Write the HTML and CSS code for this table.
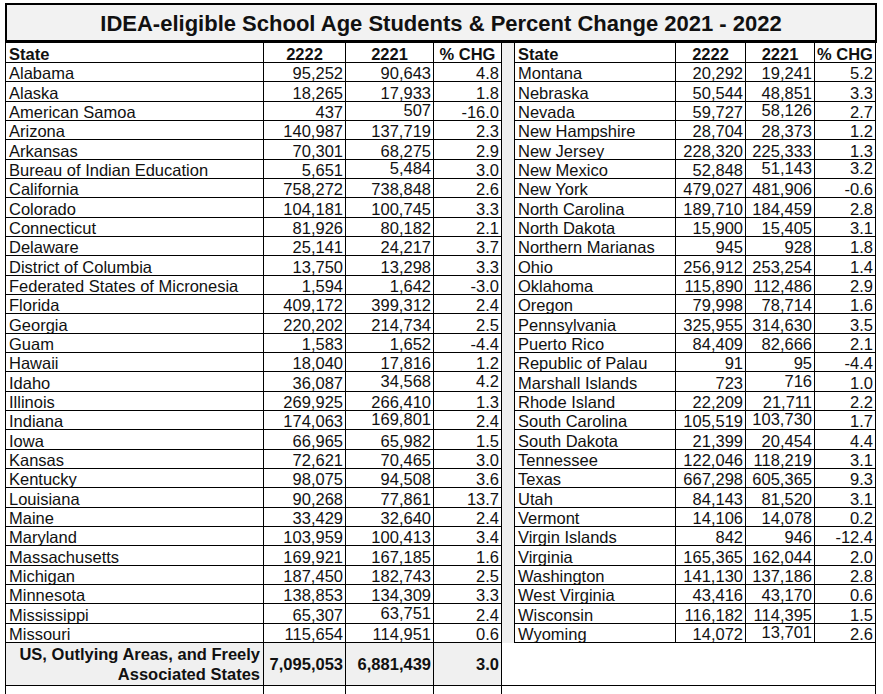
FILE: index.html
```html
<!DOCTYPE html>
<html lang="en">
<head>
    <meta charset="UTF-8">
    <title>IDEA-eligible School Age Students</title>
    <link rel="stylesheet" href="styles.css">
</head>
<body>
    <div class="sheet">
        <div class="title">IDEA-eligible School Age Students &amp; Percent Change 2021 - 2022</div>
        <table class="grid">
            <colgroup>
                <col class="c-state-l">
                <col class="c-a-l">
                <col class="c-b-l">
                <col class="c-pct-l">
                <col class="c-gap">
                <col class="c-state-r">
                <col class="c-a-r">
                <col class="c-b-r">
                <col class="c-pct-r">
            </colgroup>
            <thead>
                <tr class="head">
                    <th class="first">State</th><th>2222</th><th>2221</th><th>% CHG</th>
                    <td class="gap"></td>
                    <th class="first">State</th><th>2222</th><th>2221</th><th>% CHG</th>
                </tr>
            </thead>
            <tbody id="rows"></tbody>
            <tfoot>
                <tr class="total">
                    <td class="first label">US, Outlying Areas, and Freely<br>Associated States</td>
                    <td>7,095,053</td><td>6,881,439</td><td>3.0</td>
                    <td class="blank" colspan="5"></td>
                </tr>
                <tr class="tail">
                    <td class="first"></td><td></td><td></td><td></td>
                    <td class="blank" colspan="5"></td>
                </tr>
            </tfoot>
        </table>
    </div>

    <script>
        // 5th field: cells that sit a little high in the sheet (h)
        const left = [
            ['Alabama', '95,252', '90,643', '4.8'],
            ['Alaska', '18,265', '17,933', '1.8'],
            ['American Samoa', '437', '507', '-16.0', '..h.'],
            ['Arizona', '140,987', '137,719', '2.3'],
            ['Arkansas', '70,301', '68,275', '2.9'],
            ['Bureau of Indian Education', '5,651', '5,484', '3.0', '..h.'],
            ['California', '758,272', '738,848', '2.6'],
            ['Colorado', '104,181', '100,745', '3.3'],
            ['Connecticut', '81,926', '80,182', '2.1'],
            ['Delaware', '25,141', '24,217', '3.7'],
            ['District of Columbia', '13,750', '13,298', '3.3'],
            ['Federated States of Micronesia', '1,594', '1,642', '-3.0'],
            ['Florida', '409,172', '399,312', '2.4'],
            ['Georgia', '220,202', '214,734', '2.5'],
            ['Guam', '1,583', '1,652', '-4.4'],
            ['Hawaii', '18,040', '17,816', '1.2'],
            ['Idaho', '36,087', '34,568', '4.2', '..hh'],
            ['Illinois', '269,925', '266,410', '1.3'],
            ['Indiana', '174,063', '169,801', '2.4', '..h.'],
            ['Iowa', '66,965', '65,982', '1.5'],
            ['Kansas', '72,621', '70,465', '3.0'],
            ['Kentucky', '98,075', '94,508', '3.6'],
            ['Louisiana', '90,268', '77,861', '13.7'],
            ['Maine', '33,429', '32,640', '2.4'],
            ['Maryland', '103,959', '100,413', '3.4'],
            ['Massachusetts', '169,921', '167,185', '1.6'],
            ['Michigan', '187,450', '182,743', '2.5'],
            ['Minnesota', '138,853', '134,309', '3.3'],
            ['Mississippi', '65,307', '63,751', '2.4', '..h.'],
            ['Missouri', '115,654', '114,951', '0.6']
        ];
        const right = [
            ['Montana', '20,292', '19,241', '5.2'],
            ['Nebraska', '50,544', '48,851', '3.3'],
            ['Nevada', '59,727', '58,126', '2.7', '..h.'],
            ['New Hampshire', '28,704', '28,373', '1.2'],
            ['New Jersey', '228,320', '225,333', '1.3'],
            ['New Mexico', '52,848', '51,143', '3.2', '..hh'],
            ['New York', '479,027', '481,906', '-0.6'],
            ['North Carolina', '189,710', '184,459', '2.8'],
            ['North Dakota', '15,900', '15,405', '3.1'],
            ['Northern Marianas', '945', '928', '1.8'],
            ['Ohio', '256,912', '253,254', '1.4'],
            ['Oklahoma', '115,890', '112,486', '2.9'],
            ['Oregon', '79,998', '78,714', '1.6'],
            ['Pennsylvania', '325,955', '314,630', '3.5'],
            ['Puerto Rico', '84,409', '82,666', '2.1'],
            ['Republic of Palau', '91', '95', '-4.4'],
            ['Marshall Islands', '723', '716', '1.0', '..h.'],
            ['Rhode Island', '22,209', '21,711', '2.2'],
            ['South Carolina', '105,519', '103,730', '1.7', '..h.'],
            ['South Dakota', '21,399', '20,454', '4.4'],
            ['Tennessee', '122,046', '118,219', '3.1'],
            ['Texas', '667,298', '605,365', '9.3'],
            ['Utah', '84,143', '81,520', '3.1'],
            ['Vermont', '14,106', '14,078', '0.2'],
            ['Virgin Islands', '842', '946', '-12.4'],
            ['Virginia', '165,365', '162,044', '2.0'],
            ['Washington', '141,130', '137,186', '2.8'],
            ['West Virginia', '43,416', '43,170', '0.6'],
            ['Wisconsin', '116,182', '114,395', '1.5'],
            ['Wyoming', '14,072', '13,701', '2.6', '..h.']
        ];

        function cells(row) {
            const quirks = row[4] || '....';
            let out = '';
            for (let c = 0; c < 4; c++) {
                let cls = c === 0 ? 'first' : '';
                if (quirks[c] === 'h') cls += ' hi';
                out += '<td class="' + cls.trim() + '">' + row[c] + '</td>';
            }
            return out;
        }

        const body = document.getElementById('rows');
        let html = '';
        for (let i = 0; i < left.length; i++) {
            html += '<tr>' + cells(left[i]) + '<td class="gap"></td>' + cells(right[i]) + '</tr>';
        }
        body.innerHTML = html;
    </script>
</body>
</html>
```

FILE: styles.css
```css
body {
    margin: 0;
    font-family: "Liberation Sans", Arial, sans-serif;
    color: #111;
    background: #fff;
}
.sheet {
    padding: 3px 0 0 5px;
}
.title {
    box-sizing: border-box;
    width: 872px;
    height: 40px;
    border: 2px solid #000;
    border-bottom-width: 3px;
    background: #f2f2f2;
    font-size: 22px;
    font-weight: bold;
    text-align: center;
    line-height: 37px;
    overflow: hidden;
}
.grid {
    table-layout: fixed;
    border-collapse: separate;
    border-spacing: 0;
    width: 871px;
    font-size: 16.5px;
}
.c-state-l { width: 259px; }
.c-a-l { width: 82px; }
.c-b-l { width: 88px; }
.c-pct-l { width: 68px; }
.c-gap { width: 12px; }
.c-state-r { width: 162px; }
.c-a-r { width: 70px; }
.c-b-r { width: 69px; }
.c-pct-r { width: 61px; }
.grid th,
.grid td {
    box-sizing: border-box;
    padding: 0 2px;
    border-right: 1px solid #000;
    border-bottom: 1px solid #000;
    text-align: right;
    vertical-align: bottom;
    white-space: nowrap;
    overflow: hidden;
    line-height: 15px;
}
.grid th {
    text-align: center;
    font-weight: bold;
}
.grid .first {
    border-left: 1px solid #000;
    text-align: left;
    padding-left: 3px;
}
.grid td.hi {
    padding-bottom: 2px;
}
.grid td.gap {
    background: #f0f0f0;
    border-right: none;
    border-bottom: none;
}
.head {
    height: 20px;
}
tbody tr {
    height: 19px;
}
tbody tr:nth-child(3n+2) {
    height: 20px;
}
.total {
    height: 43px;
}
.total td {
    background: #f0f0f0;
    font-weight: bold;
    vertical-align: middle;
    line-height: 20px;
}
.total td.label {
    text-align: right;
    padding-right: 3px;
}
.grid td.blank {
    background: #fff;
}
.tail {
    height: 20px;
}
.tail td {
    border-bottom: none;
}
```
